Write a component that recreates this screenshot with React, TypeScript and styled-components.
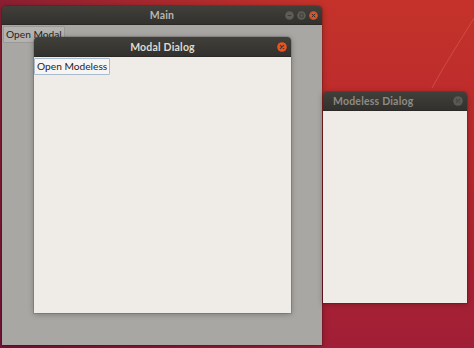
import React from 'react';
import styled, { createGlobalStyle } from 'styled-components';

const GlobalStyle = createGlobalStyle`
  html, body {
    margin: 0;
    padding: 0;
    background: #6a1639;
  }
`;

const Desktop = styled.div`
  position: relative;
  width: 474px;
  height: 348px;
  overflow: hidden;
  font-family: Lato, "Noto Sans", sans-serif;
  background:
    linear-gradient(to left, rgba(0, 0, 0, 0) 35%, rgba(70, 8, 60, 0.45) 100%),
    linear-gradient(to bottom, #c4322a 0%, #b9292d 45%, #a01e36 100%);
`;

const Swoosh = styled.svg`
  position: absolute;
  right: 0;
  top: 0;
`;

const Frame = styled.div<{ $x: number; $y: number; $w: number; $h: number }>`
  position: absolute;
  left: ${({ $x }) => $x}px;
  top: ${({ $y }) => $y}px;
  width: ${({ $w }) => $w}px;
  height: ${({ $h }) => $h}px;
  display: flex;
  flex-direction: column;
  border-radius: 4px 4px 0 0;
  overflow: hidden;
  box-shadow: 0 1px 6px rgba(0, 0, 0, 0.3), 0 0 0 1px rgba(0, 0, 0, 0.12);
`;

const TitleBar = styled.div<{ $h: number; $align: 'center' | 'left' }>`
  position: relative;
  height: ${({ $h }) => $h}px;
  flex: none;
  display: flex;
  align-items: center;
  justify-content: ${({ $align }) => ($align === 'center' ? 'center' : 'flex-start')};
  padding: 0 ${({ $align }) => ($align === 'center' ? 0 : 10)}px;
  background: linear-gradient(to bottom, #403f3a, #32312d);
  border-bottom: 1px solid #2a2926;
`;

const Title = styled.span<{ $tone: string }>`
  font-size: 10.5px;
  font-weight: 700;
  letter-spacing: 0.2px;
  color: ${({ $tone }) => $tone};
`;

const Controls = styled.div`
  position: absolute;
  right: 4px;
  top: 0;
  bottom: 0;
  display: flex;
  align-items: center;
  gap: 3px;
`;

const Body = styled.div<{ $bg: string }>`
  flex: 1;
  display: flex;
  align-items: flex-start;
  background: ${({ $bg }) => $bg};
`;

const PushButton = styled.button<{ $focus: boolean; $bg: string }>`
  margin: ${({ $focus }) => ($focus ? '1px 0 0 0' : '1px 0 0 1px')};
  padding: 0 2px;
  height: 17px;
  font-family: Lato, "Noto Sans", sans-serif;
  font-size: 10.2px;
  line-height: 15px;
  color: #1f1f1f;
  background: ${({ $bg }) => $bg};
  border: 1px solid ${({ $focus }) => ($focus ? '#a9bccd' : '#9a9995')};
  border-radius: 1px;
`;

type Kind = 'close' | 'min' | 'max';

const WinButton: React.FC<{ kind: Kind; fill: string; mark: string; size: number }> = ({ kind, fill, mark, size }) => (
  <svg width={size} height={size} viewBox="0 0 10 10">
    <circle cx="5" cy="5" r="4.8" fill={fill} />
    {kind === 'close' && (
      <path d="M3.3 3.3 L6.7 6.7 M6.7 3.3 L3.3 6.7" stroke={mark} strokeWidth="1.1" strokeLinecap="round" />
    )}
    {kind === 'min' && <path d="M3 5 H7" stroke={mark} strokeWidth="1" />}
    {kind === 'max' && <rect x="3.2" y="3.2" width="3.6" height="3.6" fill="none" stroke={mark} strokeWidth="0.9" />}
  </svg>
);

const App: React.FC = () => (
  <>
    <GlobalStyle />
    <Desktop>
      <Swoosh width="80" height="110" viewBox="0 0 80 110">
        <path d="M80 18 C 68 38, 52 62, 38 88" fill="none" stroke="rgba(255,180,160,0.28)" strokeWidth="0.8" />
      </Swoosh>

      <Frame $x={2} $y={6} $w={320} $h={339}>
        <TitleBar $h={18} $align="center">
          <Title $tone="#b9b6af">Main</Title>
          <Controls>
            <WinButton kind="min" fill="#5d5c57" mark="#3a3935" size={9} />
            <WinButton kind="max" fill="#5d5c57" mark="#3a3935" size={9} />
            <WinButton kind="close" fill="#d8562d" mark="#3a2a22" size={9} />
          </Controls>
        </TitleBar>
        <Body $bg="#a8a7a3">
          <PushButton $focus={false} $bg="#b4b3af">Open Modal</PushButton>
        </Body>
      </Frame>

      <Frame $x={323} $y={92} $w={144} $h={211}>
        <TitleBar $h={18} $align="left">
          <Title $tone="#8e8b85">Modeless Dialog</Title>
          <Controls>
            <WinButton kind="close" fill="#5b5a56" mark="#46453f" size={10} />
          </Controls>
        </TitleBar>
        <Body $bg="#efebe7" />
      </Frame>

      <Frame $x={34} $y={37} $w={257} $h={276}>
        <TitleBar $h={19} $align="center">
          <Title $tone="#dfdbd2">Modal Dialog</Title>
          <Controls>
            <WinButton kind="close" fill="#e9541f" mark="#3c3b37" size={10} />
          </Controls>
        </TitleBar>
        <Body $bg="#efebe7">
          <PushButton $focus $bg="#f6f5f3">Open Modeless</PushButton>
        </Body>
      </Frame>
    </Desktop>
  </>
);

export default App;
